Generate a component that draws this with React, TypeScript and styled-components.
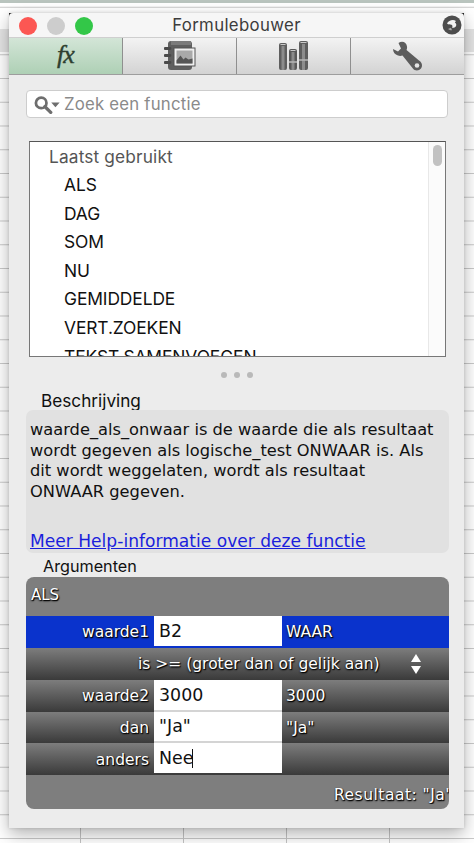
import React from 'react';
import styled, { createGlobalStyle } from 'styled-components';

const Global = createGlobalStyle`
  html, body {
    margin: 0;
    padding: 0;
    background: #fff;
  }
  body {
    font-family: "Liberation Sans", Arial, sans-serif;
    overflow: hidden;
  }
`;

const Sheet = styled.div`
  width: 474px;
  height: 843px;
  box-sizing: border-box;
  padding: 13px 0 0 9px;
  background:
    linear-gradient(#b9c4be 0 3px, transparent 3px) 0 0 / 100% 100% no-repeat,
    linear-gradient(transparent 0 29px, #e4e4e4 29px 52px, transparent 52px) 0 0 / 100% 100% no-repeat,
    linear-gradient(90deg, transparent 80px, #c4c4c4 80px 81px, transparent 81px 183px, #c4c4c4 183px 184px, transparent 184px 286px, #c4c4c4 286px 287px, transparent 287px 389px, #c4c4c4 389px 390px, transparent 390px) 0 828px / 100% 15px no-repeat,
    linear-gradient(#c9c9c9 0 1px, transparent 1px) 0 6.75px / 100% 23.75px repeat-y,
    #fff;
`;

const Window = styled.div`
  width: 455px;
  height: 815px;
  display: flex;
  flex-direction: column;
  background: linear-gradient(#222 0 5px, #ececec 5px);
  box-shadow: 0 6px 16px rgba(0, 0, 0, 0.3), 0 0 3px rgba(0, 0, 0, 0.15);
`;

const TitleBar = styled.div`
  height: 24px;
  flex: none;
  position: relative;
  display: flex;
  align-items: center;
  justify-content: center;
  background: #f6f6f6;
  border-radius: 4px 4px 0 0;
  color: #3c3c3c;
  font-family: "Inter", "Liberation Sans", sans-serif;
  font-size: 16.8px;
  letter-spacing: 0.35px;
`;

const Lights = styled.div`
  position: absolute;
  left: 10px;
  top: 4px;
  display: flex;
  gap: 10px;
`;

const Light = styled.span<{ $color: string }>`
  width: 18px;
  height: 18px;
  border-radius: 50%;
  background: ${p => p.$color};
`;

const HelpBadge = styled.div`
  position: absolute;
  right: 2px;
  top: 2px;
  line-height: 0;
`;

const Tabs = styled.div`
  height: 38px;
  flex: none;
  display: grid;
  grid-template-columns: 114px 114px 114px 1fr;
  box-sizing: border-box;
  border-bottom: 1px solid #9d9d9d;
  border-top: 1px solid #cfcfcf;
`;

const Tab = styled.div<{ $active?: boolean }>`
  display: flex;
  align-items: center;
  justify-content: center;
  background: ${p =>
    p.$active
      ? 'linear-gradient(#d3e5d7, #aed0b5)'
      : 'linear-gradient(#f3f3f3, #d3d3d3)'};
  border-right: 1px solid #8f8f8f;
  &:last-child {
    border-right: none;
  }
`;

const FxLabel = styled.span`
  font-family: "Liberation Serif", serif;
  font-style: italic;
  font-size: 26px;
  color: #2e3f30;
  -webkit-text-stroke: 0.4px #2e3f30;
  letter-spacing: -1px;
  margin-top: -2px;
`;

const Body = styled.div`
  flex: 1;
  display: flex;
  flex-direction: column;
  padding: 15px 16px 0 17px;
`;

const SearchBox = styled.div`
  height: 28px;
  box-sizing: border-box;
  display: flex;
  align-items: center;
  gap: 3px;
  padding-left: 6px;
  background: #fff;
  border: 1px solid #cdcdcd;
  border-radius: 4px;
  color: #8a8a8a;
  font-family: "Inter", "Liberation Sans", sans-serif;
  font-size: 16.8px;
  letter-spacing: 0.2px;
`;

const FunctionList = styled.div`
  margin: 23px 2px 0 3px;
  height: 216px;
  box-sizing: border-box;
  display: flex;
  background: #fff;
  border: 1px solid #777;
  border-top-color: #555;
  overflow: hidden;
`;

const ListItems = styled.div`
  flex: 1;
`;

const ListHeader = styled.div`
  height: 29px;
  line-height: 29px;
  padding-left: 19px;
  color: #555;
  font-family: "Inter", "Liberation Sans", sans-serif;
  font-size: 17.3px;
  letter-spacing: 0.15px;
`;

const ListItem = styled.div`
  height: 28.6px;
  line-height: 28.6px;
  padding-left: 34px;
  color: #111;
  font-family: "Inter", "Liberation Sans", sans-serif;
  font-size: 17.4px;
  letter-spacing: -0.1px;
  white-space: nowrap;
`;

const ScrollTrack = styled.div`
  width: 17px;
  flex: none;
  box-sizing: border-box;
  padding: 3px 3px 0 4px;
  background: #fbfbfb;
  border-left: 1px solid #e8e8e8;
`;

const ScrollThumb = styled.div`
  height: 21px;
  border-radius: 5px;
  background: #c2c2c2;
`;

const Splitter = styled.div`
  height: 35px;
  display: flex;
  align-items: center;
  justify-content: center;
  gap: 7px;
  flex: none;
`;

const Dot = styled.span`
  width: 6px;
  height: 6px;
  border-radius: 50%;
  background: #b9b9b9;
`;

const SectionLabel = styled.div<{ $indent: number; $size: number; $gap?: number }>`
  height: 18px;
  line-height: 18px;
  margin-top: ${p => p.$gap ?? 0}px;
  padding-left: ${p => p.$indent}px;
  color: #111;
  font-family: "Inter", "Liberation Sans", sans-serif;
  font-size: ${p => p.$size}px;
`;

const Description = styled.div`
  height: 143px;
  box-sizing: border-box;
  margin-right: -1px;
  padding: 10px 4px 0 4px;
  display: flex;
  flex-direction: column;
  justify-content: space-between;
  background: #e1e1e1;
  border-radius: 7px;
  color: #111;
  font-family: "DejaVu Sans", sans-serif;
`;

const DescriptionText = styled.div`
  font-size: 16.25px;
  line-height: 20.7px;
  white-space: nowrap;
`;

const HelpLink = styled.a`
  color: #1a1fdc;
  font-size: 17.1px;
  line-height: 24px;
  text-decoration: underline;
`;

const ArgPanel = styled.div`
  height: 232px;
  margin-top: 2px;
  margin-right: -1px;
  display: flex;
  flex-direction: column;
  background: #7e7e7e;
  border-radius: 8px;
  overflow: hidden;
  color: #fff;
  font-family: "DejaVu Sans", sans-serif;
  font-size: 15.5px;
  text-shadow: 1px 1px 1px #000, 0 1px 2px #111;
`;

const PanelTitle = styled.div`
  height: 39px;
  flex: none;
  line-height: 36px;
  padding-left: 5px;
  font-size: 15px;
`;

const ArgRow = styled.div<{ $selected?: boolean }>`
  height: 31.75px;
  flex: none;
  display: grid;
  grid-template-columns: 128px 128px 1fr;
  grid-template-rows: 31.75px;
  align-items: center;
  background: ${p => (p.$selected ? '#0a33cc' : 'linear-gradient(#7d7d7d, #3a3a3a)')};
`;

const ArgLabel = styled.div`
  text-align: right;
  padding: 1px 5px 0 0;
`;

const ArgField = styled.div<{ $edge?: boolean }>`
  height: 100%;
  box-sizing: border-box;
  display: flex;
  align-items: center;
  padding-left: 5px;
  background: #fff;
  border-bottom: 2px solid ${p => (p.$edge ? '#d4d4d4' : 'transparent')};
  background-clip: padding-box;
  color: #111;
  text-shadow: none;
  font-size: 17.4px;
`;

const Caret = styled.span`
  display: inline-block;
  width: 1px;
  height: 19px;
  margin-left: -1px;
  background: #111;
`;

const ArgValue = styled.div`
  padding: 1px 0 0 4px;
`;

const OperatorRow = styled.div`
  height: 32px;
  flex: none;
  box-sizing: border-box;
  display: flex;
  align-items: center;
  position: relative;
  padding: 1px 0 0 112px;
  background: linear-gradient(#7d7d7d, #3a3a3a);
`;

const Stepper = styled.svg`
  position: absolute;
  left: 383px;
  top: 5px;
`;

const ResultLine = styled.div`
  flex: 1;
  display: flex;
  align-items: flex-end;
  justify-content: flex-end;
  padding-bottom: 5px;
  font-size: 15.5px;
  letter-spacing: 0.5px;
  white-space: nowrap;
`;

const ClippedResult = styled.span`
  display: block;
  width: 115px;
  overflow: hidden;
`;

const SearchIcon = () => (
  <svg width="28" height="19" viewBox="0 0 26 18">
    <circle cx="7.5" cy="7.5" r="5" fill="none" stroke="#6e6e6e" strokeWidth="2.6" />
    <path d="M11 11l5.5 5.5" stroke="#6e6e6e" strokeWidth="3.2" strokeLinecap="round" />
    <path d="M17 7h8l-4 4.5z" fill="#6e6e6e" />
  </svg>
);

const MediaIcon = () => (
  <svg width="32" height="32" viewBox="0 0 32 32">
    <rect x="4" y="1" width="24" height="29" rx="3" fill="#5f5f5f" />
    <rect x="7" y="1" width="20" height="4" fill="#7b7b7b" />
    <path d="M1 8.5h5M1 15.5h5M1 22.5h5" stroke="#4a4a4a" strokeWidth="2.8" strokeLinecap="round" />
    <rect x="10" y="8" width="21" height="18" fill="#efefef" stroke="#555" strokeWidth="1" />
    <rect x="12.5" y="10.5" width="16" height="13" fill="#a9a9a9" />
    <path d="M12.5 23.5v-3l4-5 3 4 2-2 3 2 4-1v5z" fill="#555" />
  </svg>
);

const BooksIcon = () => (
  <svg width="32" height="32" viewBox="0 0 32 32">
    <rect x="1" y="3" width="8" height="27" rx="2" fill="#5e5e5e" />
    <rect x="3.5" y="6" width="3" height="24" fill="#8c8c8c" />
    <rect x="11" y="9" width="8" height="21" rx="2" fill="#585858" />
    <rect x="13.5" y="12" width="3" height="18" fill="#8a8a8a" />
    <rect x="21" y="1" width="9" height="29" rx="2" fill="#5e5e5e" />
    <rect x="24" y="4" width="3" height="26" fill="#8c8c8c" />
    <path d="M2.5 4.5h5M12.5 10.5h5M22.5 2.5h6" stroke="#c9c9c9" strokeWidth="1" />
    <path d="M11 22h8M21 20h9" stroke="#b5b5b5" strokeWidth="1.4" />
  </svg>
);

const WrenchIcon = () => (
  <svg width="32" height="32" viewBox="0 0 32 32">
    <path
      d="M1 9l5 2.5 3-3L6.500 3C10 .5 14.500 2 15 6.500c.2 1.600 0 2.600-.5 3.600L27 20.500c3.200 2 3.800 5.500 2 8-2.300 2.800-6.500 2.500-8.300-.3L10.500 15.500c-1.500.5-3 .6-4.500 0C3 14.500 1 12.500 1 9z"
      fill="#5c5c5c"
    />
    <circle cx="25" cy="25.5" r="2.3" fill="#e4e4e4" />
  </svg>
);

const BackBadgeIcon = () => (
  <svg width="20" height="20" viewBox="0 0 20 20">
    <circle cx="10" cy="10" r="9.5" fill="#4d4d4d" />
    <path d="M5 8.500c1.500-3 6-4.500 9-2.500l-1.200 1.500c1.500.8 2 2.500 1 4-1 1.300-2.500 1.500-3.800 1.200.8-1 .5-2.500-.5-2.900-1.500-.6-3 0-4.500-1.300z" fill="#f2f2f2" />
    <path d="M6 14c1.500 1 3 1.500 4 1.200l-1-2.400z" fill="#a5a5a5" />
  </svg>
);

const recentFunctions = ['ALS', 'DAG', 'SOM', 'NU', 'GEMIDDELDE', 'VERT.ZOEKEN', 'TEKST.SAMENVOEGEN'];

const App: React.FC = () => {
  return (
    <Sheet>
      <Global />
      <Window>
        <TitleBar>
          <Lights>
            <Light $color="#fc5753" />
            <Light $color="#cdcdcd" />
            <Light $color="#33c748" />
          </Lights>
          Formulebouwer
          <HelpBadge>
            <BackBadgeIcon />
          </HelpBadge>
        </TitleBar>
        <Tabs>
          <Tab $active><FxLabel>fx</FxLabel></Tab>
          <Tab><MediaIcon /></Tab>
          <Tab><BooksIcon /></Tab>
          <Tab><WrenchIcon /></Tab>
        </Tabs>
        <Body>
          <SearchBox>
            <SearchIcon />
            Zoek een functie
          </SearchBox>
          <FunctionList>
            <ListItems>
              <ListHeader>Laatst gebruikt</ListHeader>
              {recentFunctions.map(name => (
                <ListItem key={name}>{name}</ListItem>
              ))}
            </ListItems>
            <ScrollTrack>
              <ScrollThumb />
            </ScrollTrack>
          </FunctionList>
          <Splitter>
            <Dot />
            <Dot />
            <Dot />
          </Splitter>
          <SectionLabel $indent={15} $size={17.2}>Beschrijving</SectionLabel>
          <Description>
            <DescriptionText>
              waarde_als_onwaar is de waarde die als resultaat
              <br />
              wordt gegeven als logische_test ONWAAR is. Als
              <br />
              dit wordt weggelaten, wordt als resultaat
              <br />
              ONWAAR gegeven.
            </DescriptionText>
            <HelpLink href="#">Meer Help-informatie over deze functie</HelpLink>
          </Description>
          <SectionLabel $indent={17} $size={16.2} $gap={4}>Argumenten</SectionLabel>
          <ArgPanel>
            <PanelTitle>ALS</PanelTitle>
            <ArgRow $selected>
              <ArgLabel>waarde1</ArgLabel>
              <ArgField>B2</ArgField>
              <ArgValue>WAAR</ArgValue>
            </ArgRow>
            <OperatorRow>
              is &gt;= (groter dan of gelijk aan)
              <Stepper width="14" height="22" viewBox="0 0 14 22">
                <path d="M7 1l5 8H2z" fill="#fff" />
                <path d="M7 21l5-8H2z" fill="#fff" />
              </Stepper>
            </OperatorRow>
            <ArgRow>
              <ArgLabel>waarde2</ArgLabel>
              <ArgField $edge>3000</ArgField>
              <ArgValue>3000</ArgValue>
            </ArgRow>
            <ArgRow>
              <ArgLabel>dan</ArgLabel>
              <ArgField $edge>"Ja"</ArgField>
              <ArgValue>"Ja"</ArgValue>
            </ArgRow>
            <ArgRow>
              <ArgLabel>anders</ArgLabel>
              <ArgField>Nee<Caret /></ArgField>
              <ArgValue />
            </ArgRow>
            <ResultLine>
              <ClippedResult>Resultaat: "Ja"</ClippedResult>
            </ResultLine>
          </ArgPanel>
        </Body>
      </Window>
    </Sheet>
  );
};

export default App;
